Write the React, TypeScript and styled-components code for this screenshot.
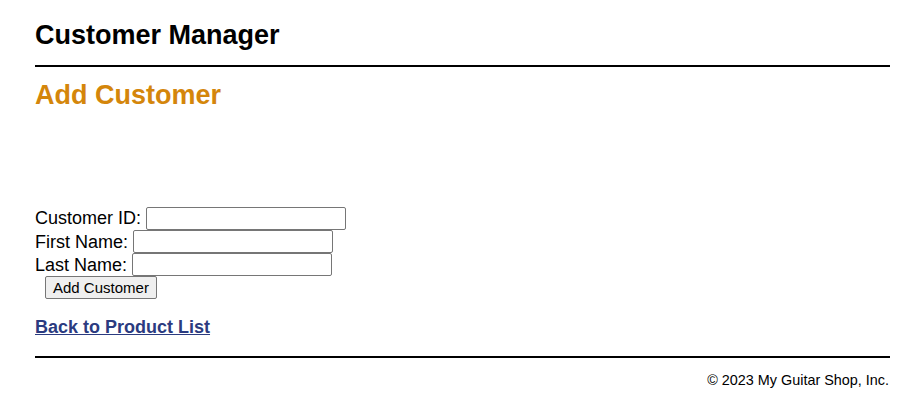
import React from "react";
import styled, { createGlobalStyle } from "styled-components";

const GlobalStyle = createGlobalStyle`
  html, body {
    margin: 0;
    padding: 0;
    background-color: #fff;
  }
  body {
    font-family: "Liberation Sans", Arial, Helvetica, sans-serif;
    font-size: 18px;
    color: #000;
  }
`;

const Page = styled.div`
  width: 855px;
  padding: 20px 0 0 35px;
`;

const Header = styled.header`
  border-bottom: 2px solid #000;
  padding-bottom: 14px;
`;

const Title = styled.h1`
  margin: 0;
  font-size: 27px;
  font-weight: bold;
  color: #000;
`;

const Main = styled.main`
  padding-bottom: 18px;
`;

const Heading = styled.h2`
  margin: 13px 0 0;
  font-size: 27px;
  font-weight: bold;
  color: #d4860b;
`;

const Form = styled.form`
  display: flex;
  flex-direction: column;
  align-items: flex-start;
  margin-top: 95px;
`;

const Row = styled.div<{ $h: number }>`
  display: flex;
  align-items: center;
  gap: 5px;
  height: ${(p) => p.$h}px;
`;

const Label = styled.label`
  font-size: 18px;
  line-height: 20px;
`;

const Input = styled.input`
  box-sizing: border-box;
  width: 200px;
  height: 23px;
  margin: 0;
  padding: 1px 2px;
  border: 1px solid #767676;
  border-radius: 2px;
  background: #fff;
  font-family: inherit;
  font-size: 13px;
`;

const SubmitButton = styled.button`
  box-sizing: border-box;
  margin: 0 0 0 10px;
  height: 23px;
  padding: 0 7px;
  border: 1px solid #767676;
  border-radius: 2px;
  background-color: #efefef;
  font-family: inherit;
  font-size: 15px;
  color: #000;
  cursor: pointer;
`;

const LinkLine = styled.p`
  margin: 18px 0 0;
`;

const BackLink = styled.a`
  color: #2b3b80;
  font-weight: bold;
  text-decoration: underline;
`;

const Footer = styled.footer`
  border-top: 2px solid #000;
`;

const Copyright = styled.p`
  margin: 14px 1px 0 0;
  text-align: right;
  font-size: 14.4px;
`;

const fields = [
  { id: "customer_id", label: "Customer ID:", h: 24 },
  { id: "first_name", label: "First Name:", h: 23 },
  { id: "last_name", label: "Last Name:", h: 23 },
];

const App = () => {
  return (
    <>
      <GlobalStyle />
      <Page>
        <Header>
          <Title>Customer Manager</Title>
        </Header>
        <Main>
          <Heading>Add Customer</Heading>
          <Form onSubmit={(e) => e.preventDefault()}>
            {fields.map((f) => (
              <Row key={f.id} $h={f.h}>
                <Label htmlFor={f.id}>{f.label}</Label>
                <Input type="text" id={f.id} name={f.id} />
              </Row>
            ))}
            <Row $h={23}>
              <SubmitButton type="submit">Add Customer</SubmitButton>
            </Row>
          </Form>
          <LinkLine>
            <BackLink href="#">Back to Product List</BackLink>
          </LinkLine>
        </Main>
        <Footer>
          <Copyright>&copy; 2023 My Guitar Shop, Inc.</Copyright>
        </Footer>
      </Page>
    </>
  );
};

export default App;
